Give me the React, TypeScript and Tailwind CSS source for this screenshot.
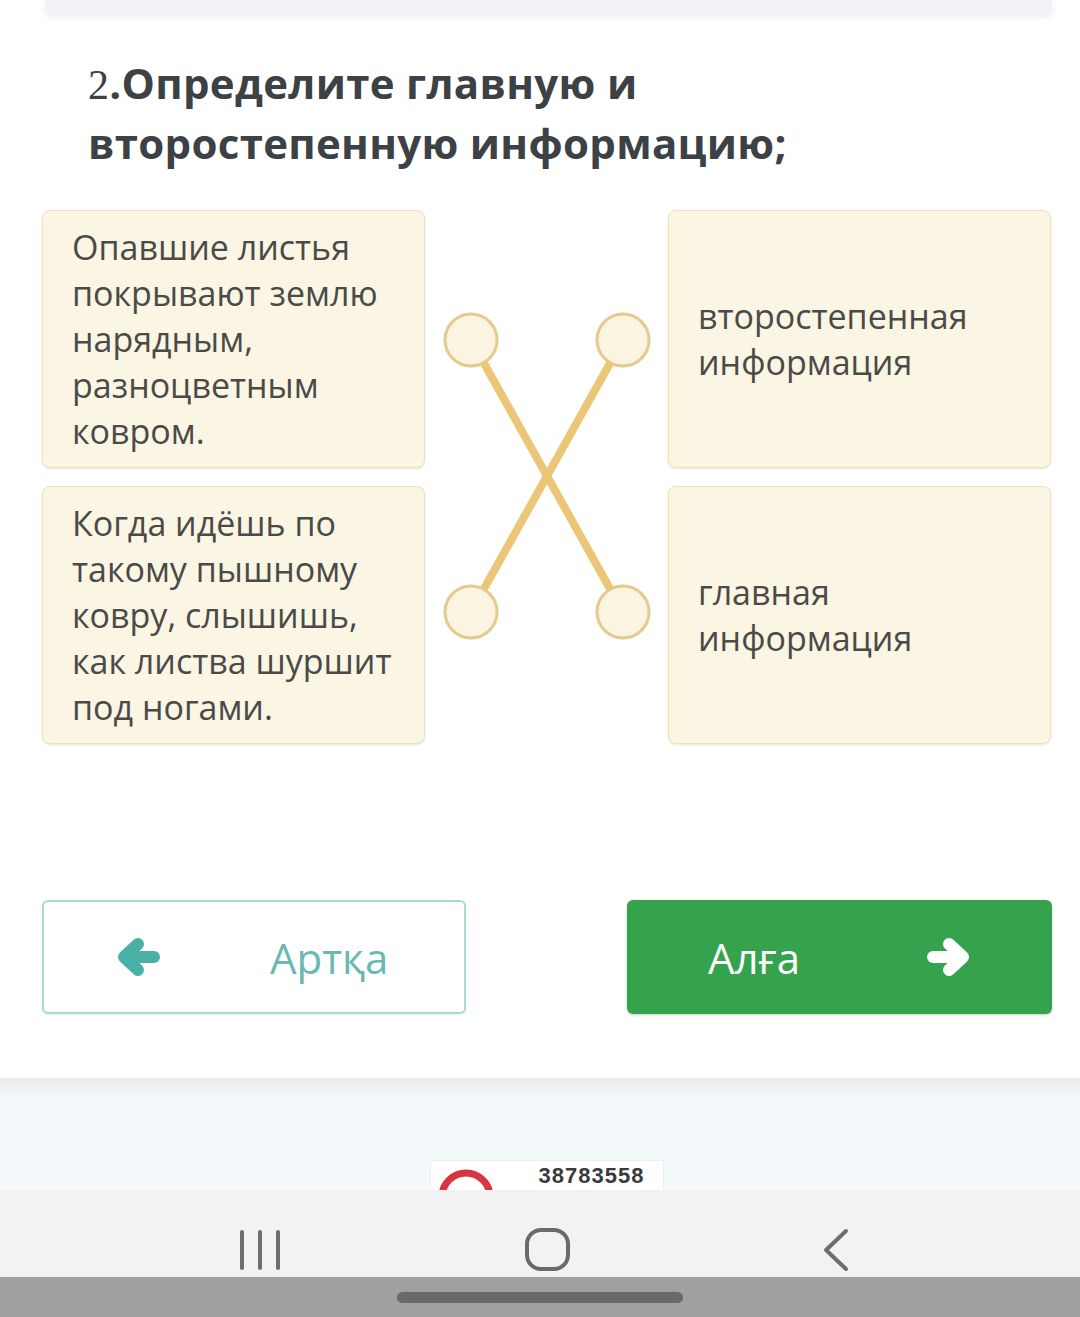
import React from "react";

const sans = { fontFamily: '"Open Sans", "Noto Sans", sans-serif' };

function Card({ children, center }: { children: React.ReactNode; center?: boolean }) {
  return (
    <div
      className={`h-[258px] rounded-[8px] border border-[#ece0bf] bg-[#fbf5e3] pl-[29px] pr-[16px] text-[34px] leading-[46px] text-[#4a4a48] shadow-[0_1px_2px_rgba(180,160,110,0.25)] flex ${
        center ? "items-center" : "items-start pt-[13px]"
      }`}
    >
      <div>{children}</div>
    </div>
  );
}

function Connectors() {
  return (
    <svg width="243" height="534" viewBox="0 0 243 534" className="block">
      <line x1="46" y1="130" x2="198" y2="402" stroke="#ebc676" strokeWidth="8" strokeLinecap="round" />
      <line x1="198" y1="130" x2="46" y2="402" stroke="#ebc676" strokeWidth="8" strokeLinecap="round" />
      {[
        [46, 130],
        [198, 130],
        [46, 402],
        [198, 402],
      ].map(([cx, cy], i) => (
        <circle key={i} cx={cx} cy={cy} r="26" fill="#fbf4e1" stroke="#e3cb8e" strokeWidth="3" />
      ))}
    </svg>
  );
}

function Arrow({ color, dir }: { color: string; dir: "left" | "right" }) {
  return (
    <svg
      width="44"
      height="40"
      viewBox="0 0 44 40"
      className={dir === "right" ? "-scale-x-100" : ""}
    >
      <line x1="10" y1="20" x2="37" y2="20" stroke={color} strokeWidth="12" strokeLinecap="round" />
      <polyline
        points="21,7 7,20 21,33"
        fill="none"
        stroke={color}
        strokeWidth="12"
        strokeLinecap="round"
        strokeLinejoin="round"
      />
    </svg>
  );
}

export default function App() {
  return (
    <div className="w-[1080px] h-[1317px] bg-white flex flex-col overflow-hidden" style={sans}>
      {/* top bar */}
      <div className="ml-[45px] mr-[28px] h-[14px] shrink-0 bg-[#f1f2f8] rounded-b-[6px] shadow-[0_3px_6px_rgba(200,205,215,0.35)]" />

      {/* title */}
      <h1 className="mt-[40px] pl-[88px] pr-[60px] text-[42px] leading-[57px] font-bold text-[#3c4145] tracking-[0.3px]">
        <span className="font-medium" style={{ fontFamily: '"Liberation Serif", serif' }}>
          2
        </span>
        .Определите главную и
        <br />
        второстепенную информацию;
      </h1>

      {/* matching */}
      <div className="mt-[39px] ml-[42px] grid grid-cols-[383px_243px_383px] grid-rows-[258px_258px] gap-y-[18px]">
        <Card>
          Опавшие листья
          <br />
          покрывают землю
          <br />
          нарядным,
          <br />
          разноцветным
          <br />
          ковром.
        </Card>
        <div className="row-span-2">
          <Connectors />
        </div>
        <Card center>
          второстепенная
          <br />
          информация
        </Card>
        <Card>
          Когда идёшь по
          <br />
          такому пышному
          <br />
          ковру, слышишь,
          <br />
          как листва шуршит
          <br />
          под ногами.
        </Card>
        <Card center>
          главная
          <br />
          информация
        </Card>
      </div>

      {/* buttons */}
      <div className="mt-[156px] ml-[42px] mr-[28px] flex justify-between">
        <div className="w-[424px] h-[114px] rounded-[6px] border-2 border-[#a9d9d5] bg-white flex items-center pl-[73px] gap-[109px] shadow-[0_1px_2px_rgba(0,0,0,0.08)]">
          <Arrow color="#4bb0a8" dir="left" />
          <span className="text-[42px] text-[#6ab8b2]">Артқа</span>
        </div>
        <div className="w-[425px] h-[114px] rounded-[6px] bg-[#35a24d] flex items-center justify-between pl-[81px] pr-[82px] shadow-[0_1px_3px_rgba(0,80,20,0.25)]">
          <span className="text-[42px] text-white">Алға</span>
          <Arrow color="#ffffff" dir="right" />
        </div>
      </div>

      {/* footer band */}
      <div className="mt-[64px] h-[112px] shrink-0 bg-[linear-gradient(to_bottom,#e8ebee_0px,#f3f8fa_22px,#f4f9fb_100%)] flex items-end justify-center overflow-hidden">
        <div className="w-[234px] h-[30px] ml-[13px] bg-white border border-b-0 border-[#eceef0] flex items-start">
          <svg width="60" height="30" viewBox="0 0 60 30" className="ml-[5px] mt-[6px] shrink-0">
            <path d="M6 30 A 24 24 0 0 1 54 30" fill="none" stroke="#d9343f" strokeWidth="7" />
          </svg>
          <span
            className="ml-[43px] mt-[3px] text-[22px] leading-[24px] font-bold text-[#3a3a3a] tracking-[1px]"
            style={{ fontFamily: '"Liberation Sans", Arial, sans-serif' }}
          >
            38783558
          </span>
        </div>
      </div>

      {/* android nav */}
      <div className="h-[87px] shrink-0 bg-[#f2f2f2] relative flex items-center">
        <div className="absolute left-[240px] top-[40px] flex gap-[14px]">
          <div className="w-[4px] h-[40px] rounded-full bg-[#6e6e6e]" />
          <div className="w-[4px] h-[40px] rounded-full bg-[#6e6e6e]" />
          <div className="w-[4px] h-[40px] rounded-full bg-[#6e6e6e]" />
        </div>
        <div className="absolute left-[525px] top-[38px] w-[45px] h-[43px] rounded-[16px] border-[4px] border-[#6a6a6a]" />
        <svg className="absolute left-[820px] top-[38px]" width="30" height="44" viewBox="0 0 30 44">
          <path d="M26 3 L6 22 L26 41" fill="none" stroke="#6e6e6e" strokeWidth="4" strokeLinecap="round" strokeLinejoin="round" />
        </svg>
      </div>
      <div className="h-[40px] shrink-0 bg-[#a0a0a0] flex items-center justify-center">
        <div className="w-[286px] h-[11px] rounded-full bg-[#696969]" />
      </div>
    </div>
  );
}
